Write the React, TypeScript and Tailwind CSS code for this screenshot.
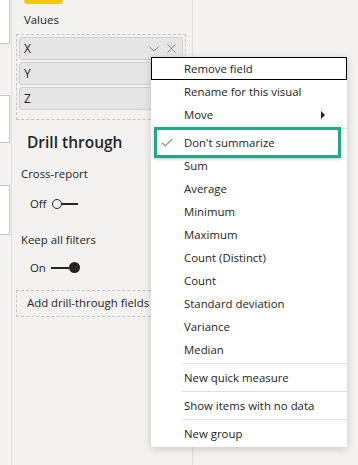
import { Check, ChevronDown, X } from "lucide-react"

const font = { fontFamily: '"Open Sans", "Noto Sans", sans-serif' }

const summarize = [
  "Sum",
  "Average",
  "Minimum",
  "Maximum",
  "Count (Distinct)",
  "Count",
  "Standard deviation",
  "Variance",
  "Median",
]

function Sep() {
  return <div className="my-[2px] ml-[31px] h-px bg-[#e1dfdd]" />
}

function Item({ label }: { label: string }) {
  return <div className="flex h-[23px] items-center pl-[33px] text-[11.4px] text-[#252423]">{label}</div>
}

export default function App() {
  return (
    <div className="relative flex h-[465px] w-[358px] overflow-hidden bg-[#f3f2f1]" style={font}>
      {/* left rail with cut off cards */}
      <div className="flex w-[12px] shrink-0 flex-col border-r border-[#e1dfdd]">
        <div className="h-[44px] w-[10px] border-r border-b border-[#c8c6c4] bg-white" />
        <div className="mt-[51px] h-[48px] w-[10px] border-y border-r border-[#c8c6c4] bg-white" />
        <div className="mt-[42px] h-[50px] w-[10px] border-y border-r border-[#c8c6c4] bg-white" />
      </div>

      {/* main pane */}
      <div className="w-[181px] shrink-0 border-r border-[#e1dfdd] pl-[4px] text-[11.4px] text-[#252423]">
        <div className="ml-[8px] h-[4px] w-[39px] rounded-b-sm bg-[#f2c811]" />
        <div className="mt-[7px] pl-[8px]">Values</div>
        <div className="mt-[6px] flex w-[170px] flex-col gap-[2px] border border-dashed border-[#c8c6c4] px-[2px] pt-[2px] pb-[9px]">
          <div className="flex h-[23px] items-center rounded-[3px] border border-[#d2d0ce] bg-[#e6e6e6] pl-[4px]">
            <span className="flex-1 text-[12px]">X</span>
            <ChevronDown className="h-[18px] w-[18px] text-[#605e5c]" strokeWidth={1} />
            <X className="ml-[1px] mr-[3px] h-[15px] w-[15px] text-[#605e5c]" strokeWidth={1.1} />
          </div>
          <div className="flex h-[23px] items-center rounded-[3px] border border-[#d2d0ce] bg-[#e6e6e6] pl-[4px] text-[12px]">
            Y
          </div>
          <div className="flex h-[23px] items-center rounded-[3px] border border-[#d2d0ce] bg-[#e6e6e6] pl-[4px] text-[12px]">
            Z
          </div>
        </div>

        <div className="mt-[12px] pl-[11px] text-[15.5px] font-semibold leading-[20px]">Drill through</div>
        <div className="mt-[13px] pl-[5px]">Cross-report</div>
        <div className="mt-[13px] flex items-center pl-[14px]">
          <span>Off</span>
          <span className="ml-[5px] h-[10px] w-[10px] rounded-full border-[1.5px] border-[#252423]" />
          <span className="h-[1.5px] w-[16px] bg-[#252423]" />
        </div>
        <div className="mt-[19px] pl-[5px]">Keep all filters</div>
        <div className="mt-[11px] flex items-center pl-[14px]">
          <span>On</span>
          <span className="ml-[5px] h-[2px] w-[18px] bg-[#252423]" />
          <span className="h-[11px] w-[11px] rounded-full bg-[#252423]" />
        </div>
        <div className="mt-[13px] flex h-[27px] w-[170px] items-center border border-dashed border-[#c8c6c4] pl-[10px] whitespace-nowrap">
          Add drill-through fields
        </div>
      </div>

      {/* context menu */}
      <div className="absolute top-[57px] left-[151px] w-[196px] bg-white pb-[2px] shadow-[0_2px_8px_rgba(0,0,0,0.18)]">
        <div className="flex h-[23px] items-center border border-black pl-[32px] text-[11.4px] text-[#252423]">Remove field</div>
        <Item label="Rename for this visual" />
        <div className="flex h-[23px] items-center justify-between pr-[22px] pl-[33px] text-[11.4px] text-[#252423]">
          <span>Move</span>
          <span className="h-0 w-0 border-y-[4px] border-l-[4px] border-y-transparent border-l-[#252423]" />
        </div>
        <Sep />
        <div className="relative">
          <div className="absolute top-[-4px] right-[6px] bottom-[-4px] left-[3px] border-[3px] border-[#23a68a] shadow-[0_1px_3px_rgba(0,0,0,0.25)]" />
          <div className="flex h-[23px] items-center pl-[9px] text-[11.4px] text-[#252423]">
            <Check className="mr-[10px] h-[14px] w-[14px] text-[#6f9d8c]" strokeWidth={2} />
            Don't summarize
          </div>
        </div>
        {summarize.map((s) => (
          <Item key={s} label={s} />
        ))}
        <Sep />
        <Item label="New quick measure" />
        <Sep />
        <Item label="Show items with no data" />
        <Sep />
        <Item label="New group" />
      </div>
    </div>
  )
}
